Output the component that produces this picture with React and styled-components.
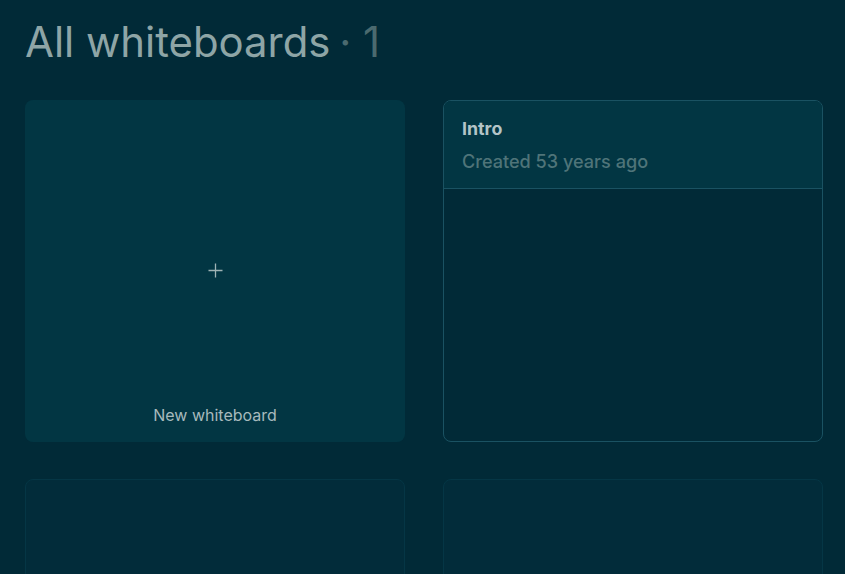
import React from 'react';
import styled, { createGlobalStyle } from 'styled-components';

const Global = createGlobalStyle`
  html, body {
    margin: 0;
    padding: 0;
    background: #012a37;
    font-family: Inter, "Noto Sans", sans-serif;
    overflow: hidden;
  }
`;

const S = {
  Page: styled.main`
    padding: 16px 21px 0 25px;
    height: 574px;
    box-sizing: border-box;
  `,
  Title: styled.h1`
    margin: 0 0 32px 0;
    font-size: 41.9px;
    font-weight: 400;
    line-height: 52px;
    color: #8ea5a6;
    span {
      margin-left: -3px;
      color: #4b6a6f;
    }
  `,
  Grid: styled.div`
    display: grid;
    grid-template-columns: repeat(2, 380px);
    grid-auto-rows: 342px;
    column-gap: 38px;
    row-gap: 37px;
  `,
  NewCard: styled.button`
    display: flex;
    flex-direction: column;
    align-items: center;
    border: none;
    border-radius: 8px;
    background: #023643;
    padding: 0 0 17px 0;
    font-family: inherit;
    cursor: pointer;
  `,
  Plus: styled.div`
    flex: 1;
    display: flex;
    align-items: center;
    justify-content: center;
    padding-top: 34px;
  `,
  NewLabel: styled.span`
    font-size: 16px;
    line-height: 19px;
    color: #a7babd;
  `,
  Board: styled.div`
    display: flex;
    flex-direction: column;
    border: 1px solid #1a5262;
    border-radius: 8px;
    overflow: hidden;
  `,
  Header: styled.div`
    background: #023643;
    border-bottom: 1px solid #1a5262;
    padding: 17px 18px 16px;
  `,
  Name: styled.div`
    font-size: 17.8px;
    font-weight: 700;
    color: #b3c4c7;
    line-height: 22px;
  `,
  Meta: styled.div`
    margin-top: 10px;
    font-size: 18.1px;
    font-weight: 500;
    color: #4f7479;
    line-height: 22px;
  `,
  Placeholder: styled.div`
    border: 1px solid #053645;
    border-radius: 8px;
    background: #022c3a;
  `,
};

const PlusIcon = () => (
  <svg width="15" height="15" viewBox="0 0 15 15">
    <path d="M7.5 0.5v14M0.5 7.5h14" stroke="#9fb3b5" strokeWidth="1.3" fill="none" />
  </svg>
);

export default function App() {
  return (
    <>
      <Global />
      <S.Page>
        <S.Title>
          All whiteboards <span>· 1</span>
        </S.Title>
        <S.Grid>
          <S.NewCard>
            <S.Plus>
              <PlusIcon />
            </S.Plus>
            <S.NewLabel>New whiteboard</S.NewLabel>
          </S.NewCard>
          <S.Board>
            <S.Header>
              <S.Name>Intro</S.Name>
              <S.Meta>Created 53 years ago</S.Meta>
            </S.Header>
          </S.Board>
          <S.Placeholder />
          <S.Placeholder />
        </S.Grid>
      </S.Page>
    </>
  );
}
